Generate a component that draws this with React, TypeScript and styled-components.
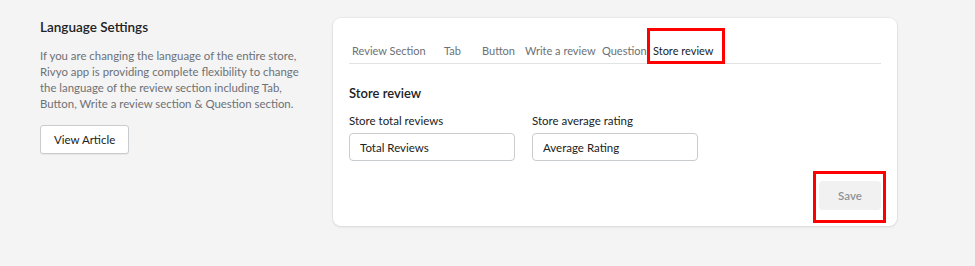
import styled, { createGlobalStyle } from 'styled-components';

const GlobalStyle = createGlobalStyle`
	html, body {
		margin: 0;
		padding: 0;
		background: #f4f4f4;
	}
	body {
		font-family: Lato, "Noto Sans", sans-serif;
		color: #202223;
		-webkit-font-smoothing: antialiased;
	}
`;

const tabs = [
	{ label: 'Review Section', width: 92 },
	{ label: 'Tab', width: 38 },
	{ label: 'Button', width: 43 },
	{ label: 'Write a review', width: 77 },
	{ label: 'Question', width: 51 },
	{ label: 'Store review', width: 80 },
];

const App = (): JSX.Element => {
	const active = 'Store review';

	return (
		<>
			<GlobalStyle />
			<Page>
				<Aside>
					<Heading>Language Settings</Heading>
					<Description>
						If you are changing the language of the entire store, Rivyo app is providing complete
						flexibility to change the language of the review section including Tab, Button, Write a
						review section &amp; Question section.
					</Description>
					<OutlineButton>View Article</OutlineButton>
				</Aside>

				<Card>
					<TabBar>
						{tabs.map((t) => (
							<TabItem key={t.label} w={t.width} active={t.label === active}>
								{t.label}
								{t.label === active && <Highlight />}
							</TabItem>
						))}
					</TabBar>

					<SectionTitle>Store review</SectionTitle>

					<Fields>
						<Field>
							<Label>Store total reviews</Label>
							<Input defaultValue="Total Reviews" />
						</Field>
						<Field>
							<Label>Store average rating</Label>
							<Input defaultValue="Average Rating" />
						</Field>
					</Fields>

					<Footer>
						<SaveButton disabled>
							Save
							<SaveHighlight />
						</SaveButton>
					</Footer>
				</Card>
			</Page>
		</>
	);
};

const Page = styled.div`
	display: grid;
	grid-template-columns: 260px 564px;
	column-gap: 33px;
	padding: 18px 0 0 40px;
	width: 975px;
	height: 266px;
	box-sizing: border-box;
`;

const Aside = styled.div`
	display: flex;
	flex-direction: column;
	align-items: flex-start;
`;

const Heading = styled.h2`
	margin: 0;
	font-size: 13.5px;
	font-weight: 600;
	line-height: 18px;
	color: #202223;
`;

const Description = styled.p`
	margin: 12px 0 0;
	font-size: 11.4px;
	line-height: 16px;
	color: #6d7175;
	width: 262px;
`;

const OutlineButton = styled.button`
	margin-top: 13px;
	height: 29px;
	padding: 0 13px;
	font-family: inherit;
	font-size: 11.5px;
	color: #202223;
	background: #fff;
	border: 1px solid #c9cccf;
	border-radius: 3px;
	box-shadow: 0 1px 0 rgba(0, 0, 0, 0.05);
`;

const Card = styled.div`
	background: #fff;
	border-radius: 8px;
	box-shadow: 0 0 0 1px rgba(63, 63, 68, 0.04), 0 1px 3px rgba(63, 63, 68, 0.12);
	padding: 0 16px 16px;
	height: 208px;
	box-sizing: border-box;
	display: flex;
	flex-direction: column;
`;

const TabBar = styled.div`
	display: flex;
	height: 45px;
	align-items: flex-end;
	border-bottom: 1px solid #e1e3e5;
`;

const TabItem = styled.div<{ w: number; active: boolean }>`
	position: relative;
	width: ${({ w }): string => `${w}px`};
	padding: 0 0 4px 3px;
	box-sizing: border-box;
	font-size: 11px;
	line-height: 16px;
	white-space: nowrap;
	color: ${({ active }): string => (active ? '#202223' : '#6d7175')};
`;

const Highlight = styled.span`
	position: absolute;
	left: -3px;
	right: 5px;
	top: -15px;
	bottom: -1px;
	border: 3px solid #ff0000;
	pointer-events: none;
`;

const SectionTitle = styled.h3`
	margin: 21px 0 0;
	font-size: 13px;
	font-weight: 600;
	line-height: 16px;
	color: #202223;
`;

const Fields = styled.div`
	display: flex;
	gap: 17px;
	margin-top: 12px;
`;

const Field = styled.label`
	display: flex;
	flex-direction: column;
	gap: 5px;
`;

const Label = styled.span`
	font-size: 11.5px;
	line-height: 15px;
	color: #202223;
`;

const Input = styled.input`
	width: 166px;
	height: 28px;
	box-sizing: border-box;
	padding: 0 10px;
	font-family: inherit;
	font-size: 11.5px;
	color: #202223;
	border: 1px solid #c9cccf;
	border-radius: 4px;
	outline: none;
`;

const Footer = styled.div`
	display: flex;
	justify-content: flex-end;
	margin-top: auto;
`;

const SaveButton = styled.button`
	position: relative;
	width: 62px;
	height: 29px;
	font-family: inherit;
	font-size: 11.5px;
	font-weight: 600;
	color: #8c9196;
	background: #f1f1f1;
	border: none;
	border-radius: 4px;
`;

const SaveHighlight = styled.span`
	position: absolute;
	left: -6px;
	right: -5px;
	top: -10px;
	bottom: -13px;
	border: 3px solid #ff0000;
	pointer-events: none;
`;

export default App;
